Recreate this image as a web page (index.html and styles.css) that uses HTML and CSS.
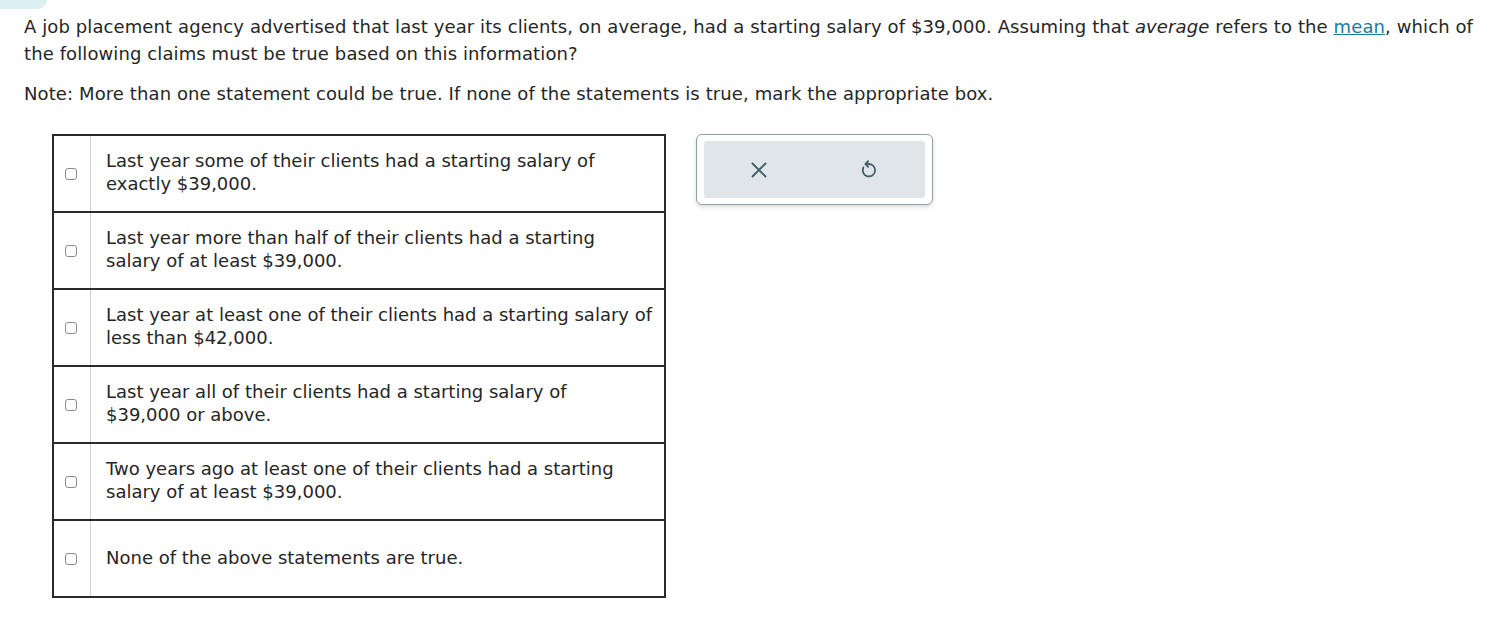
FILE: index.html
```html
<!DOCTYPE html>
<html>
<head>
<meta charset="utf-8">
<link rel="stylesheet" href="styles.css">
</head>
<body>
<div class="corner"></div>
<div class="page">
  <p class="q">A job placement agency advertised that last year its clients, on average, had a starting salary of <span class="num">$39,000</span>. Assuming that <i>average</i> refers to the <a class="link" href="#">mean</a>, which of the following claims must be true based on this information?</p>
  <p class="note">Note: More than one statement could be true. If none of the statements is true, mark the appropriate box.</p>
  <div class="work">
    <div class="choices">
      <div class="row"><div class="cb"><span class="box"></span></div><div class="txt"><div>Last year some of their clients had a starting salary of<br>exactly <span class="num">$39,000</span>.</div></div></div>
      <div class="row"><div class="cb"><span class="box"></span></div><div class="txt"><div>Last year more than half of their clients had a starting<br>salary of at least <span class="num">$39,000</span>.</div></div></div>
      <div class="row"><div class="cb"><span class="box"></span></div><div class="txt"><div>Last year at least one of their clients had a starting salary of<br>less than <span class="num">$42,000</span>.</div></div></div>
      <div class="row"><div class="cb"><span class="box"></span></div><div class="txt"><div>Last year all of their clients had a starting salary of<br><span class="num">$39,000</span> or above.</div></div></div>
      <div class="row"><div class="cb"><span class="box"></span></div><div class="txt"><div>Two years ago at least one of their clients had a starting<br>salary of at least <span class="num">$39,000</span>.</div></div></div>
      <div class="row"><div class="cb"><span class="box"></span></div><div class="txt"><div>None of the above statements are true.</div></div></div>
    </div>
    <div class="tools">
      <div class="tools-inner">
        <svg class="icon" width="20" height="20" viewBox="0 0 20 20"><path d="M3.5 3.5 L16.5 16.5 M16.5 3.5 L3.5 16.5" stroke="#3e5b66" stroke-width="1.8" fill="none" stroke-linecap="round"/></svg>
        <svg class="icon" width="20" height="22" viewBox="0 0 20 22"><path d="M8.5 5.2 A6.2 6.2 0 1 1 4.4 8.4" stroke="#3e5b66" stroke-width="1.8" fill="none" stroke-linecap="round"/><path d="M9.2 2.2 L6.4 5 L9.2 7.8" stroke="#3e5b66" stroke-width="1.8" fill="none" stroke-linecap="round" stroke-linejoin="round"/></svg>
      </div>
    </div>
  </div>
</div>
</body>
</html>
```
FILE: styles.css
```css
html, body { margin: 0; padding: 0; background: #fff; }
body { font-family: "DejaVu Sans", Verdana, sans-serif; font-size: 18px; color: #262626; letter-spacing: 0.1px; }
.corner { position: absolute; left: 0; top: 0; width: 47px; height: 9px; background: #dcf0f4; border-bottom-right-radius: 9px; }
.page { padding: 13px 0 0 24px; }
.q { margin: 0; line-height: 27px; width: 1462px; }
.note { margin: 13px 0 0 0; line-height: 27px; }
.link { color: #1b7c98; text-decoration: underline; }
.work { display: flex; align-items: flex-start; margin-top: 27px; margin-left: 28px; gap: 30px; }
.choices { box-sizing: border-box; width: 614px; border: 2px solid #2a2a2a; letter-spacing: 0; }
.row { display: flex; height: 75px; }
.row + .row { border-top: 2px solid #2a2a2a; }
.cb { width: 37px; flex: none; border-right: 1px solid #cfcfcf; display: flex; align-items: center; justify-content: center; padding-right: 3px; box-sizing: border-box; }
.box { width: 10px; height: 10px; border: 1.5px solid #8a8a8a; border-radius: 3px; background: #fff; }
.txt { flex: 1; padding: 0 4px 3px 15px; display: flex; align-items: center; line-height: 23px; white-space: nowrap; }
.tools { box-sizing: border-box; width: 237px; padding: 6px 7px; border: 1.5px solid #8ea2a9; border-radius: 6px; box-shadow: 0 2px 4px rgba(0,0,0,0.15); background: #fff; }
.tools-inner { height: 57px; background: #dfe5e8; border-radius: 3px; display: flex; align-items: center; gap: 90px; padding-left: 45px; }
.icon { display: block; }
```
